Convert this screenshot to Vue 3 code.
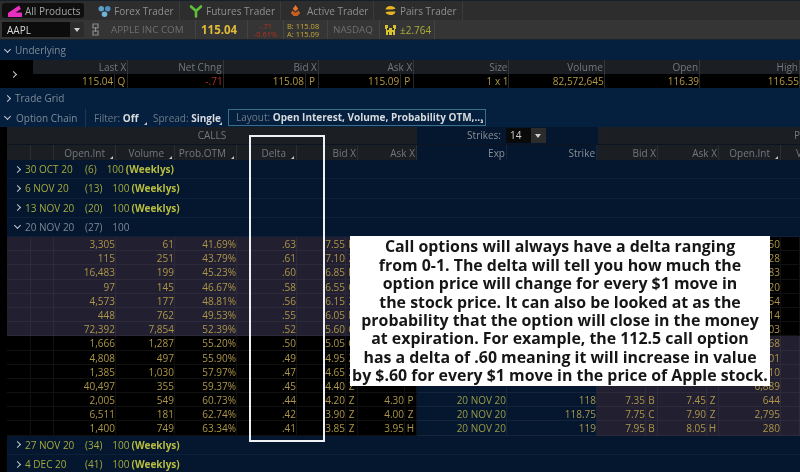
<template>
  <div class="app">
    <div class="tabs">
      <div class="tab active">
        <svg width="16" height="14" viewBox="0 0 16 14"><path d="M1 13V9L12 1.500 14 5 8.500 8.500H15V13Z" fill="#e82fc0" /></svg>
        <span>All Products</span>
      </div>
      <div class="tab forex">
        <svg width="13" height="12" viewBox="0 0 14 13"><circle cx="3.500" cy="4" r="3" fill="#5aa0c8" /><circle cx="10.500" cy="4" r="3" fill="#4b90c0" /><circle cx="7" cy="10" r="3" fill="#6db4d8" /></svg>
        <span>Forex Trader</span>
      </div>
      <div class="tab futures">
        <svg width="14" height="14" viewBox="0 0 14 14"><path d="M2 2.500 7 7l5-4.500M7 7v5.500" fill="none" stroke="#5fbf3a" stroke-width="2.600" stroke-linecap="round" /></svg>
        <span>Futures Trader</span>
      </div>
      <div class="tab activet">
        <svg width="11" height="13" viewBox="0 0 12 14"><path d="M6 1 9 5 6 8 3 5Z" fill="#e8742a" /><path d="M2.500 7 6 9.500 9.500 7 11 10 8 13H4L1 10Z" fill="#c95f20" /></svg>
        <span>Active Trader</span>
      </div>
      <div class="tab pairs">
        <svg width="13" height="11" viewBox="0 0 14 12"><path d="M1.500 5C2 2 4.500 1 7 1s4.500 1 5.500 3L9 5H1.500Z" fill="#e6b422" /><path d="M12.500 7C12 10 9.500 11 7 11S2.500 10 1.500 8L5 7h7.500Z" fill="#e6b422" /></svg>
        <span>Pairs Trader</span>
      </div>
    </div>

    <div class="quote">
      <div class="symbol"><span>AAPL</span><i class="drop"></i></div>
      <div class="link">
        <svg width="7" height="13" viewBox="0 0 7 13"><path d="M1 1h5v4H1zM1 8h5v4H1zM3.500 4v5" fill="none" stroke="#8b8b8b" stroke-width="1.200" /></svg>
      </div>
      <div class="q-name">APPLE INC COM</div>
      <div class="q-last">115.04</div>
      <div class="q-chg"><span>-.71</span><span>-0.61%</span></div>
      <div class="q-ba"><span>B: 115.08</span><span>A: 115.09</span></div>
      <div class="q-exch">NASDAQ</div>
      <div class="q-move">
        <svg width="11" height="10" viewBox="0 0 11 10"><path d="M0 0h3v3H2v2h2V3h3v2h2V3H8V0h3v4h-1v6H8V7H7v3H4V7H3v3H1V4H0Z" fill="#d8c22e" /></svg>
        <span>±2.764</span>
      </div>
    </div>

    <div class="section"><i class="chev down"></i><span>Underlying</span></div>

    <div class="under">
      <div class="under-arrow"><i class="chev"></i></div>
      <div class="under-table">
        <div v-for="c in underlying" :key="c.head" class="under-col">
          <div class="under-head">{{ c.head }}</div>
          <div class="under-val" :class="{ neg: c.neg }">
            <span class="num">{{ c.val }}</span>
            <span v-if="c.exch" class="ex">{{ c.exch }}</span>
          </div>
        </div>
      </div>
    </div>

    <div class="section"><i class="chev"></i><span>Trade Grid</span></div>

    <div class="section chain-bar">
      <i class="chev down"></i>
      <span class="bar-title">Option Chain</span>
      <div class="opt filter">Filter: <b>Off</b><i class="corner"></i></div>
      <div class="opt spread">Spread: <b>Single</b><i class="corner"></i></div>
      <div class="opt layout">Layout: <b>Open Interest, Volume, Probability OTM,...</b><i class="corner"></i></div>
    </div>

    <div class="chain">
      <div class="banner">
        <div class="banner-calls">CALLS</div>
        <div class="banner-mid">
          <span>Strikes:</span>
          <div class="strikes"><span>14</span><i class="drop"></i></div>
        </div>
        <div class="banner-puts">PUTS</div>
      </div>

      <div class="row heads">
        <div
          v-for="(h, i) in headers"
          :key="i"
          class="cell"
          :class="[h.side, { sortable: h.sortable, last: h.last }]"
          :style="{ gridColumn: 'span ' + (h.span || 1) }"
        >
          {{ h.text }}
        </div>
      </div>

      <div v-for="group in before" :key="group.date" class="expiry">
        <i class="chev"></i>
        <span class="date">{{ group.date }}</span>
        <span class="count">({{ group.count }})</span>
        <span class="hundred">100</span>
        <b>(Weeklys)</b>
      </div>

      <div class="expiry open">
        <i class="chev down"></i>
        <span class="date">20 NOV 20</span>
        <span class="count">(27)</span>
        <span class="hundred">100</span>
      </div>

      <div v-for="(r, i) in rows" :key="i" class="row data" :class="i < 7 ? 'itm' : 'otm'">
        <div v-for="(c, j) in cellsOf(r)" :key="j" class="cell" :class="c.cls">{{ c.text }}</div>
      </div>

      <div v-for="group in after" :key="group.date" class="expiry">
        <i class="chev"></i>
        <span class="date">{{ group.date }}</span>
        <span class="count">({{ group.count }})</span>
        <span class="hundred">100</span>
        <b>(Weeklys)</b>
      </div>
    </div>

    <div class="delta-box"></div>

    <div class="callout">
      <p>
        Call options will always have a delta ranging<br />
        from 0-1. The delta will tell you how much the<br />
        option price will change for every $1 move in<br />
        the stock price. It can also be looked at as the<br />
        probability that the option will close in the money<br />
        at expiration. For example, the 112.5 call option<br />
        has a delta of .60 meaning it will increase in value<br />
        by $.60 for every $1 move in the price of Apple stock.
      </p>
    </div>
  </div>
</template>

<script setup>
const underlying = [
  { head: 'Last X', val: '115.04', exch: 'Q' },
  { head: 'Net Chng', val: '-.71', neg: true },
  { head: 'Bid X', val: '115.08', exch: 'P' },
  { head: 'Ask X', val: '115.09', exch: 'P' },
  { head: 'Size', val: '1 x 1' },
  { head: 'Volume', val: '82,572,645' },
  { head: 'Open', val: '116.39' },
  { head: 'High', val: '116.55' },
]

const headers = [
  { text: '', side: 'c' },
  { text: '', side: 'c' },
  { text: 'Open.Int', side: 'c', sortable: true },
  { text: 'Volume', side: 'c', sortable: true },
  { text: 'Prob.OTM', side: 'c', sortable: true },
  { text: 'Delta', side: 'c', sortable: true },
  { text: '', side: 'c' },
  { text: 'Bid X', side: 'c', span: 2 },
  { text: 'Ask X', side: 'c', span: 2 },
  { text: 'Exp', side: 'm' },
  { text: 'Strike', side: 'm' },
  { text: 'Bid X', side: 'p', span: 2 },
  { text: 'Ask X', side: 'p', span: 2 },
  { text: 'Open.Int', side: 'p', sortable: true },
  { text: 'Volume', side: 'p', last: true },
]

const before = [
  { date: '30 OCT 20', count: 6 },
  { date: '6 NOV 20', count: 13 },
  { date: '13 NOV 20', count: 20 },
]

const after = [
  { date: '27 NOV 20', count: 34 },
  { date: '4 DEC 20', count: 41 },
]

// rows the callout hides only carry what stays visible around it
const rows = [
  ['3,305', '61', '41.69%', '.63', '7.55', 'B', '50'],
  ['115', '251', '43.79%', '.61', '7.10', 'Z', '28'],
  ['16,483', '199', '45.23%', '.60', '6.85', 'B', '83'],
  ['97', '145', '46.67%', '.58', '6.55', 'C', '20'],
  ['4,573', '177', '48.81%', '.56', '6.15', 'Z', '54'],
  ['448', '762', '49.53%', '.55', '6.05', 'B', '14'],
  ['72,392', '7,854', '52.39%', '.52', '5.60', 'C', '03'],
  ['1,666', '1,287', '55.20%', '.50', '5.05', 'C', '68'],
  ['4,808', '497', '55.90%', '.49', '4.95', 'Z', '01'],
  ['1,385', '1,030', '57.97%', '.47', '4.65', 'Z', '10'],
  ['40,497', '355', '59.37%', '.45', '4.40', 'Z', '6,889'],
  ['2,005', '549', '60.73%', '.44', '4.20', 'Z', '644', '4.30', 'P', '118', '7.35', 'B', '7.45', 'Z'],
  ['6,511', '181', '62.74%', '.42', '3.90', 'Z', '2,795', '4.00', 'Z', '118.75', '7.75', 'C', '7.90', 'Z'],
  ['1,400', '749', '63.34%', '.41', '3.85', 'Z', '280', '3.95', 'H', '119', '7.95', 'B', '8.05', 'H'],
]

function cellsOf(r) {
  const [oi, vol, prob, delta, bid, bx, poi, ask = '', ax = '', strike = '', pbid = '', pbx = '', pask = '', pax = ''] = r
  return [
    { text: '', cls: 'c' },
    { text: '', cls: 'c' },
    { text: oi, cls: 'c' },
    { text: vol, cls: 'c' },
    { text: prob, cls: 'c' },
    { text: delta, cls: 'c' },
    { text: '', cls: 'c' },
    { text: bid, cls: 'c' },
    { text: bx, cls: 'c ex' },
    { text: ask, cls: 'c' },
    { text: ax, cls: 'c ex' },
    { text: strike ? '20 NOV 20' : '', cls: 'm' },
    { text: strike, cls: 'm' },
    { text: pbid, cls: 'p' },
    { text: pbx, cls: 'p ex' },
    { text: pask, cls: 'p' },
    { text: pax, cls: 'p ex' },
    { text: poi, cls: 'p' },
    { text: '', cls: 'p' },
  ]
}
</script>

<style scoped>
.app {
  position: relative;
  width: 800px;
  height: 472px;
  overflow: hidden;
  background: #04172f;
  font-family: "Open Sans", "Liberation Sans", sans-serif;
  font-size: 10px;
  color: #8a8a8a;
  filter: blur(0.35px);
}
.tabs {
  display: flex;
  height: 20px;
  background: #2e2d2d;
  border-top: 1px solid #14202c;
  box-sizing: border-box;
}
.tab {
  display: flex;
  align-items: center;
  gap: 3px;
  height: 19px;
  padding-left: 9px;
  box-sizing: border-box;
  border-right: 1px solid #3b3a3a;
  font-size: 10px;
  color: #8f8f8f;
  white-space: nowrap;
}
.tab.active {
  width: 82px;
  height: 15px;
  margin: 2px 0 0 2px;
  padding: 0 0 0 5px;
  background: #0f0f10;
  border: 0;
  border-radius: 3px;
  gap: 2px;
  color: #a5a5a5;
}
.tab.forex {
  width: 96px;
  padding-left: 14px;
}
.tab.futures {
  width: 101px;
}
.tab.activet {
  width: 93px;
  gap: 6px;
}
.tab.pairs {
  width: 89px;
  padding-left: 10px;
}
.quote {
  display: flex;
  align-items: center;
  height: 20px;
  background: #363535;
  border-bottom: 1px solid #1a2430;
  box-sizing: border-box;
}
.symbol {
  display: flex;
  align-items: center;
  justify-content: space-between;
  width: 82px;
  height: 15px;
  margin-left: 2px;
  padding-left: 5px;
  box-sizing: border-box;
  background: #0c0c0c;
  color: #d8d8d8;
  font-size: 10px;
}
.drop {
  position: relative;
  display: block;
  width: 14px;
  height: 100%;
  background: #2c2c2c;
}
.drop::after {
  content: "";
  position: absolute;
  left: 4px;
  top: 6px;
  border: 3px solid transparent;
  border-top: 4px solid #cfcfcf;
  border-bottom: 0;
}
.link {
  display: flex;
  width: 27px;
  padding-left: 8px;
  box-sizing: border-box;
}
.q-name {
  width: 84px;
  color: #6f6f6f;
  font-size: 9.800px;
  border-right: 1px solid #454444;
  line-height: 19px;
  white-space: nowrap;
}
.q-last {
  width: 52px;
  padding-left: 5px;
  box-sizing: border-box;
  color: #e0b83a;
  font-size: 11.500px;
  font-weight: 700;
  border-right: 1px solid #454444;
  line-height: 19px;
}
.q-chg,
.q-ba {
  display: flex;
  flex-direction: column;
  font-size: 7.500px;
  line-height: 8px;
  height: 19px;
  justify-content: center;
  white-space: nowrap;
}
.q-chg {
  width: 35px;
  align-items: center;
  color: #b5301f;
  border-right: 1px solid #454444;
}
.q-ba {
  width: 43px;
  padding-left: 3px;
  box-sizing: border-box;
  color: #c7a63a;
  overflow: hidden;
}
.q-exch {
  width: 53px;
  padding-left: 5px;
  box-sizing: border-box;
  color: #6f6f6f;
  font-size: 9.800px;
  border-right: 1px solid #454444;
  border-left: 1px solid #454444;
  line-height: 19px;
}
.q-move {
  display: flex;
  align-items: center;
  gap: 4px;
  width: 55px;
  padding-left: 5px;
  box-sizing: border-box;
  height: 19px;
  color: #a8ad3a;
  font-size: 10px;
  border-right: 1px solid #454444;
}
.section {
  display: flex;
  align-items: center;
  height: 20px;
  padding-left: 5px;
  box-sizing: border-box;
  background: #05203e;
  font-size: 10px;
  color: #7f8a96;
  gap: 5px;
}
.chev {
  display: block;
  width: 4px;
  height: 4px;
  border-top: 1.500px solid #c4ccd4;
  border-right: 1.500px solid #c4ccd4;
  transform: rotate(45deg);
  flex: none;
}
.chev.down {
  transform: translateY(-1px) rotate(135deg);
}
.under {
  display: flex;
  height: 28px;
  background: #000;
}
.under-arrow {
  display: flex;
  align-items: center;
  width: 33px;
  padding-left: 11px;
  box-sizing: border-box;
}
.under-table {
  display: grid;
  grid-template-columns: repeat(7, 95.300px) 1fr;
  flex: 1;
}
.under-col {
  min-width: 0;
}
.under-head {
  height: 14px;
  line-height: 14px;
  background: #1b1f24;
  text-align: right;
  padding-right: 1px;
  border-right: 1px solid #33363a;
  color: #74787c;
}
.under-val {
  display: flex;
  height: 14px;
  line-height: 14px;
  color: #b39a45;
  border-right: 1px solid #26282b;
}
.under-val .num {
  flex: 1;
  text-align: right;
  overflow: hidden;
  white-space: nowrap;
}
.under-val .ex {
  width: 12px;
  text-align: center;
  border-left: 1px solid #26282b;
  flex: none;
  margin-left: 1px;
}
.under-val.neg {
  color: #b5301f;
}
.chain-bar {
  height: 19px;
  gap: 0;
}
.bar-title {
  width: 75px;
  padding-left: 6px;
  box-sizing: border-box;
  white-space: nowrap;
}
.opt {
  position: relative;
  height: 18px;
  line-height: 18px;
  color: #6f7a86;
  white-space: nowrap;
  box-sizing: border-box;
}
.opt b {
  color: #d6dade;
  font-weight: 700;
}
.filter {
  width: 64px;
  padding-left: 8px;
  border-left: 1px solid #1f3650;
}
.spread {
  width: 75px;
  padding-left: 4px;
}
.layout {
  width: 258px;
  height: 17px;
  margin-left: 4px;
  padding-left: 7px;
  line-height: 15px;
  border: 1px solid #3a6f8a;
}
.corner {
  position: absolute;
  right: 2px;
  bottom: 2px;
  border-bottom: 3px solid #c8c8c8;
  border-left: 3px solid transparent;
}
.chain {
  padding-left: 7px;
  background: #000;
}
.banner {
  display: flex;
  height: 17px;
  background: #04172f;
  line-height: 17px;
}
.banner-calls {
  width: 410px;
  text-align: center;
  background: #1b1f24;
  color: #74787c;
}
.banner-mid {
  display: flex;
  align-items: center;
  justify-content: flex-end;
  gap: 5px;
  width: 129px;
  padding-right: 52px;
  color: #8a9096;
}
.strikes {
  display: flex;
  align-items: center;
  justify-content: space-between;
  width: 40px;
  height: 15px;
  padding-left: 4px;
  box-sizing: border-box;
  background: #0a0a0a;
  color: #d0d0d0;
}
.strikes .drop {
  width: 15px;
}
.banner-puts {
  flex: 1;
  padding-left: 196px;
  background: #1b1f24;
  color: #74787c;
  white-space: nowrap;
  overflow: hidden;
}
.row {
  display: grid;
  grid-template-columns: 24px 23px 62px 59px 62px 60px 28px 21px 12px 47px 12px 90px 90px 49px 12px 49px 12px 62px 1fr;
}
.heads {
  height: 16px;
  line-height: 16px;
  border-top: 1px solid #0b1420;
  box-sizing: border-box;
  color: #74787c;
}
.heads .cell {
  position: relative;
  text-align: right;
  overflow: hidden;
  white-space: nowrap;
  border-right: 1px solid #2b2e32;
  padding-right: 1px;
}
.heads .cell.c,
.heads .cell.p {
  background: #1b1f24;
}
.heads .cell.m {
  background: #04172f;
  border-right: 1px solid #12263f;
  color: #8a9096;
}
.heads .cell.sortable {
  padding-right: 10px;
}
.heads .cell.last {
  padding-left: 15px;
  text-align: left;
  border-right: 0;
}
.heads .cell.sortable::after {
  content: "";
  position: absolute;
  right: 2px;
  bottom: 1px;
  border-bottom: 3px solid #c8c8c8;
  border-left: 3px solid transparent;
}
.expiry {
  display: flex;
  align-items: center;
  height: 19.250px;
  padding-left: 8px;
  box-sizing: border-box;
  background: #04172f;
  border-bottom: 1px solid #0c2139;
  color: #a4a93c;
  white-space: nowrap;
}
.expiry .chev {
  margin-right: 3px;
}
.expiry .date {
  width: 60px;
  margin-left: 2px;
}
.expiry .hundred {
  margin-left: 10px;
  margin-right: 2px;
}
.expiry b {
  color: #b8bd3e;
  font-weight: 700;
}
.expiry.open {
  color: #7b8794;
}
.data {
  height: 14.200px;
  line-height: 14px;
  color: #ad9648;
  box-sizing: border-box;
}
.data .cell {
  text-align: right;
  overflow: hidden;
  white-space: nowrap;
  border-right: 1px solid rgba(120, 120, 120, 0.14);
  border-bottom: 1px solid rgba(120, 120, 120, 0.14);
}
.data .cell.ex {
  text-align: center;
}
.data .cell.m {
  background: #04172f;
  color: #9a9a45;
}
.data .cell.m + .cell.m {
  color: #ad9648;
}
.itm .cell.c,
.otm .cell.p {
  background: #211f30;
}
.otm .cell.c,
.itm .cell.p {
  background: #000;
}
.delta-box {
  position: absolute;
  left: 249px;
  top: 135px;
  width: 76px;
  height: 307px;
  box-sizing: border-box;
  border: 2px solid #eef1f3;
}
.callout {
  position: absolute;
  left: 350px;
  top: 236px;
  display: flex;
  align-items: center;
  justify-content: center;
  width: 420px;
  height: 150px;
  background: #fff;
  color: #161616;
}
.callout p {
  margin: 0;
  text-align: center;
  white-space: nowrap;
  font-size: 15.900px;
  line-height: 18.400px;
  font-weight: 700;
}
</style>

<style>
body {
  margin: 0;
  background: #000;
  overflow: hidden;
}
</style>
